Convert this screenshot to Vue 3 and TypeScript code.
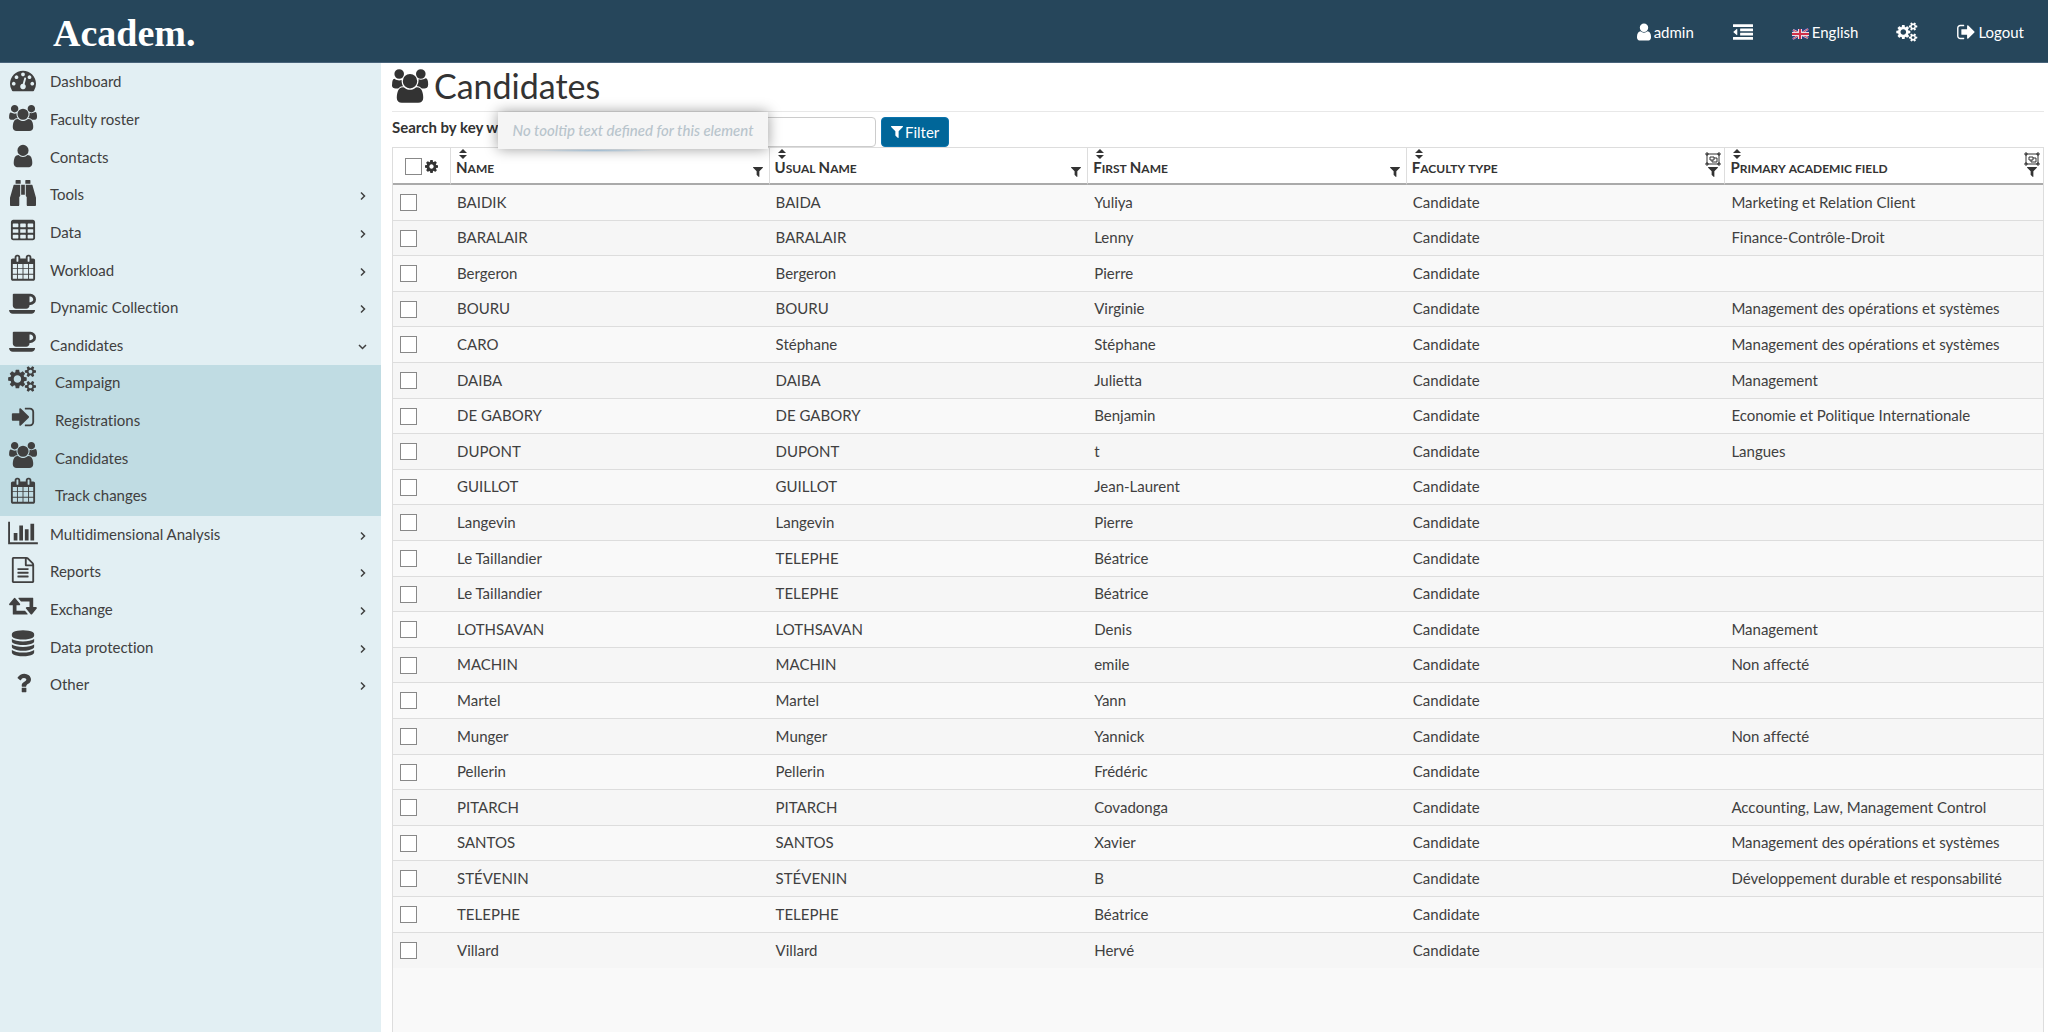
<script setup lang="ts">
import { ref } from 'vue'

interface Icon {
  box: string
  d: string
}

interface MenuItem {
  label: string
  icon: string
  arrow?: boolean
  children?: MenuItem[]
}

interface Candidate {
  name: string
  usual: string
  first: string
  field: string
}

const icons: Record<string, Icon> = {
  dashboard: {
    box: '0 0 1792 1792',
    d: 'M384 1152q0-53-37.5-90.5t-90.5-37.5-90.5 37.5-37.5 90.5 37.5 90.5 90.5 37.5 90.5-37.5 37.5-90.5zm192-448q0-53-37.5-90.5t-90.5-37.5-90.5 37.5-37.5 90.5 37.5 90.5 90.5 37.5 90.5-37.5 37.5-90.5zm428 481l101-382q6-26-7.5-48.5t-38.5-29.5-48 6.5-30 39.5l-101 382q-60 5-107 43.5t-63 98.5q-20 77 20 146t117 89 146-20 89-117q16-60-6-117t-72-91zm660-33q0-53-37.5-90.5t-90.5-37.5-90.5 37.5-37.5 90.5 37.5 90.5 90.5 37.5 90.5-37.5 37.5-90.5zm-640-640q0-53-37.5-90.5t-90.5-37.5-90.5 37.5-37.5 90.5 37.5 90.5 90.5 37.5 90.5-37.5 37.5-90.5zm448 192q0-53-37.5-90.5t-90.5-37.5-90.5 37.5-37.5 90.5 37.5 90.5 90.5 37.5 90.5-37.5 37.5-90.5zm320 448q0 261-141 483-19 29-54 29h-1402q-35 0-54-29-141-221-141-483 0-182 71-348t191-286 286-191 348-71 348 71 286 191 191 286 71 348z',
  },
  users: {
    box: '64 0 1920 1792',
    d: 'M657 896q-162 5-265 128h-134q-82 0-138-40.5t-56-118.5q0-353 124-353 6 0 43.5 21t97.5 42.5 119 21.5q67 0 133-23-5 37-5 66 0 159 90 290zm1071 637q0 120-73 189.5t-194 69.5h-874q-121 0-194-69.5t-73-189.5q0-53 3.5-103.5t14-109 26.5-108.5 43-97.5 62-81 85.5-53.5 111.5-20q10 0 43 21.5t73 48 107 48 135 21.5 135-21.5 107-48 73-48 43-21.5q61 0 111.5 20t85.5 53.5 62 81 43 97.5 26.5 108.5 14 109 3.5 103.5zm-1024-1277q0 106-75 181t-181 75-181-75-75-181 75-181 181-75 181 75 75 181zm704 384q0 159-112.5 271.5t-271.5 112.5-271.5-112.5-112.5-271.5 112.5-271.5 271.5-112.5 271.5 112.5 112.5 271.5zm576 225q0 78-56 118.5t-138 40.5h-134q-103-123-265-128 90-131 90-290 0-29-5-66 66 23 133 23 59 0 119-21.5t97.5-42.5 43.5-21q124 0 124 353zm-128-609q0 106-75 181t-181 75-181-75-75-181 75-181 181-75 181 75 75 181z',
  },
  user: {
    box: '256 0 1280 1792',
    d: 'M1536 1399q0 109-62.5 187t-150.5 78h-854q-88 0-150.5-78t-62.5-187q0-85 8.5-160.5t31.5-152 58.5-131 94-89 134.5-34.5q131 128 313 128t313-128q76 0 134.5 34.5t94 89 58.5 131 31.5 152 8.5 160.5zm-256-887q0 159-112.5 271.5t-271.5 112.5-271.5-112.5-112.5-271.5 112.5-271.5 271.5-112.5 271.5 112.5 112.5 271.5z',
  },
  binoculars: {
    box: '0 0 1792 1792',
    d: 'M704 320v768q0 26-19 45t-45 19v576q0 26-19 45t-45 19h-512q-26 0-45-19t-19-45v-512l249-873q7-23 31-23h424zm320 0v704h-256v-704h256zm768 896v512q0 26-19 45t-45 19h-512q-26 0-45-19t-19-45v-576q-26 0-45-19t-19-45v-768h424q24 0 31 23zm-1056-1184v224h-352v-224q0-14 9-23t23-9h288q14 0 23 9t9 23zm672 0v224h-352v-224q0-14 9-23t23-9h288q14 0 23 9t9 23z',
  },
  table: {
    box: '0 0 1792 1792',
    d: 'M224 128h1344q66 0 113 47t47 113v1088q0 66-47 113t-113 47h-1344q-66 0-113-47t-47-113v-1088q0-66 47-113t113-47zM192 416v192q0 32 32 32h320q32 0 32-32v-192q0-32-32-32h-320q-32 0-32 32zM704 416v192q0 32 32 32h320q32 0 32-32v-192q0-32-32-32h-320q-32 0-32 32zM1216 416v192q0 32 32 32h320q32 0 32-32v-192q0-32-32-32h-320q-32 0-32 32zM192 800v192q0 32 32 32h320q32 0 32-32v-192q0-32-32-32h-320q-32 0-32 32zM704 800v192q0 32 32 32h320q32 0 32-32v-192q0-32-32-32h-320q-32 0-32 32zM1216 800v192q0 32 32 32h320q32 0 32-32v-192q0-32-32-32h-320q-32 0-32 32zM192 1184v192q0 32 32 32h320q32 0 32-32v-192q0-32-32-32h-320q-32 0-32 32zM704 1184v192q0 32 32 32h320q32 0 32-32v-192q0-32-32-32h-320q-32 0-32 32zM1216 1184v192q0 32 32 32h320q32 0 32-32v-192q0-32-32-32h-320q-32 0-32 32z',
  },
  calendar: {
    box: '0 90 1792 1792',
    d: 'M192 1664h288v-288h-288v288zm352 0h320v-288h-320v288zm-352-352h288v-320h-288v320zm352 0h320v-320h-320v320zm-352-384h288v-288h-288v288zm736 736h320v-288h-320v288zm-384-736h320v-288h-320v288zm768 736h288v-288h-288v288zm-384-352h320v-320h-320v320zm-352-864v-288q0-13-9.5-22.5t-22.5-9.5h-64q-13 0-22.5 9.5t-9.5 22.5v288q0 13 9.5 22.5t22.5 9.5h64q13 0 22.5-9.5t9.5-22.5zm736 864h288v-320h-288v320zm-384-384h320v-288h-320v288zm384 0h288v-288h-288v288zm32-480v-288q0-13-9.5-22.5t-22.5-9.5h-64q-13 0-22.5 9.5t-9.5 22.5v288q0 13 9.5 22.5t22.5 9.5h64q13 0 22.5-9.5t9.5-22.5zm384-64v1280q0 52-38 90t-90 38h-1408q-52 0-90-38t-38-90v-1280q0-52 38-90t90-38h128v-96q0-66 47-113t113-47h64q66 0 113 47t47 113v96h384v-96q0-66 47-113t113-47h64q66 0 113 47t47 113v96h128q52 0 90 38t38 90z',
  },
  coffee: {
    box: '0 360 1920 1792',
    d: 'M1664 800q0-80-56-136t-136-56h-64v384h64q80 0 136-56t56-136zm-1664 736h1792q0 106-75 181t-181 75h-1280q-106 0-181-75t-75-181zm1856-736q0 159-112.5 271.5t-271.5 112.5h-64v32q0 92-66 158t-158 66h-704q-92 0-158-66t-66-158v-736q0-26 19-45t45-19h1152q159 0 271.5 112.5t112.5 271.5z',
  },
  cogs: {
    box: '0 0 1920 1792',
    d: 'M832 896q0-106-75-181t-181-75-181 75-75 181 75 181 181 75 181-75 75-181zm768 512q0-52-38-90t-90-38-90 38-38 90q0 53 37.5 90.5t90.5 37.5 90.5-37.5 37.5-90.5zm0-1024q0-52-38-90t-90-38-90 38-38 90q0 53 37.5 90.5t90.5 37.5 90.5-37.5 37.5-90.5zm-384 421v185q0 10-7 19.5t-16 10.5l-155 24q-11 35-32 76 34 48 90 115 7 11 7 20 0 12-7 19-23 30-82.5 89.5t-78.5 59.5q-11 0-21-7l-115-90q-37 19-77 31-11 108-23 155-7 24-30 24h-186q-11 0-20-7.5t-10-17.5l-23-153q-34-10-75-31l-118 89q-7 7-20 7-11 0-21-8-144-133-144-160 0-9 7-19 10-14 41-53t47-61q-23-44-35-82l-152-24q-10-1-17-9.5t-7-19.5v-185q0-10 7-19.5t16-10.5l155-24q11-35 32-76-34-48-90-115-7-11-7-20 0-12 7-20 22-30 82-89t79-59q11 0 21 7l115 90q34-18 77-32 11-108 23-154 7-24 30-24h186q11 0 20 7.5t10 17.5l23 153q34 10 75 31l118-89q8-7 20-7 11 0 21 8 144 133 144 160 0 8-7 19-12 16-42 54t-45 60q23 48 34 82l152 23q10 2 17 10.5t7 19.5zm640 533v140q0 16-149 31-12 27-30 52 51 113 51 138 0 4-4 7-122 71-124 71-8 0-46-47t-52-68q-20 2-30 2t-30-2q-14 21-52 68t-46 47q-2 0-124-71-4-3-4-7 0-25 51-138-18-25-30-52-149-15-149-31v-140q0-16 149-31 13-29 30-52-51-113-51-138 0-4 4-7 4-2 35-20t59-34 30-16q8 0 46 46.5t52 67.5q20-2 30-2t30 2q51-71 92-112l6-2q4 0 124 70 4 3 4 7 0 25-51 138 17 23 30 52 149 15 149 31zm0-1024v140q0 16-149 31-12 27-30 52 51 113 51 138 0 4-4 7-122 71-124 71-8 0-46-47t-52-68q-20 2-30 2t-30-2q-14 21-52 68t-46 47q-2 0-124-71-4-3-4-7 0-25 51-138-18-25-30-52-149-15-149-31v-140q0-16 149-31 13-29 30-52-51-113-51-138 0-4 4-7 4-2 35-20t59-34 30-16q8 0 46 46.5t52 67.5q20-2 30-2t30 2q51-71 92-112l6-2q4 0 124 70 4 3 4 7 0 25-51 138 17 23 30 52 149 15 149 31z',
  },
  cog: {
    box: '128 128 1536 1536',
    d: 'M1152 896q0-106-75-181t-181-75-181 75-75 181 75 181 181 75 181-75 75-181zm512-109v222q0 12-8 23t-20 13l-185 28q-19 54-39 91 35 50 107 138 10 12 10 25t-9 23q-27 37-99 108t-94 71q-12 0-26-9l-138-108q-44 23-91 38-16 136-29 186-7 28-36 28h-222q-14 0-24.5-8.5t-11.5-21.5l-28-184q-49-16-90-37l-141 107q-10 9-25 9-14 0-25-11-126-114-165-168-7-10-7-23 0-12 8-23 15-21 51-66.5t54-70.5q-27-50-41-99l-183-27q-13-2-21-12.5t-8-23.5v-222q0-12 8-23t19-13l186-28q14-46 39-92-40-57-107-138-10-12-10-24 0-10 9-23 26-36 98.5-107.5t94.5-71.5q13 0 26 10l138 107q44-23 91-38 16-136 29-186 7-28 36-28h222q14 0 24.5 8.5t11.5 21.5l28 184q49 16 90 37l142-107q9-9 24-9 13 0 25 10 129 119 165 170 7 8 7 22 0 12-8 23-15 21-51 66.5t-54 70.5q26 50 41 98l183 28q13 2 21 12.5t8 23.5z',
  },
  signIn: {
    box: '0 0 1792 1792',
    d: 'M1312 896q0 26-19 45l-544 544q-19 19-45 19t-45-19-19-45v-288h-448q-26 0-45-19t-19-45v-384q0-26 19-45t45-19h448v-288q0-26 19-45t45-19 45 19l544 544q19 19 19 45zm352-352v704q0 119-84.500 203.500t-203.500 84.500h-320q-13 0-22.500-9.500t-9.500-22.500q0-4-1-20t-.5-26.500 3-23.500 10-19.500 20.500-6.500h320q66 0 113-47t47-113v-704q0-66-47-113t-113-47h-312l-11.500-1-11.500-3-8-5.500-7-9-2-13.500q0-4-1-20t-.5-26.500 3-23.500 10-19.500 20.500-6.500h320q119 0 203.500 84.500t84.500 203.500z',
  },
  signOut: {
    box: '64 0 1600 1792',
    d: 'M704 1440q0 4 1 20t.5 26.500-3 23.500-10 19.500-20.500 6.500h-320q-119 0-203.500-84.500t-84.500-203.500v-704q0-119 84.500-203.500t203.500-84.500h320q13 0 22.500 9.500t9.500 22.500q0 4 1 20t.5 26.500-3 23.500-10 19.500-20.500 6.500h-320q-66 0-113 47t-47 113v704q0 66 47 113t113 47h312l11.500 1 11.500 3 8 5.500 7 9 2 13.500zm928-544q0 26-19 45l-544 544q-19 19-45 19t-45-19-19-45v-288h-448q-26 0-45-19t-19-45v-384q0-26 19-45t45-19h448v-288q0-26 19-45t45-19 45 19l544 544q19 19 19 45z',
  },
  chart: {
    box: '0 0 2048 1792',
    d: 'M640 896v512h-256v-512h256zm384-512v1024h-256v-1024h256zm1024 1152v128h-2048v-1536h128v1408h1920zm-640-896v768h-256v-768h256zm384-384v1152h-256v-1152h256z',
  },
  file: {
    box: '0 0 1792 1792',
    d: 'M1596 380q28 28 48 76t20 88v1152q0 40-28 68t-68 28h-1344q-40 0-68-28t-28-68v-1600q0-40 28-68t68-28h896q40 0 88 20t76 48zm-444-244v376h376q-10-29-22-41l-313-313q-12-12-41-22zm384 1528v-1024h-416q-40 0-68-28t-28-68v-416h-768v1536h1280zm-1024-864q0-14 9-23t23-9h704q14 0 23 9t9 23v64q0 14-9 23t-23 9h-704q-14 0-23-9t-9-23v-64zm736 224q14 0 23 9t9 23v64q0 14-9 23t-23 9h-704q-14 0-23-9t-9-23v-64q0-14 9-23t23-9h704zm0 256q14 0 23 9t9 23v64q0 14-9 23t-23 9h-704q-14 0-23-9t-9-23v-64q0-14 9-23t23-9h704z',
  },
  exchange: {
    box: '0 190 1920 1792',
    d: 'M1280 1504q0 13-9.500 22.500t-22.500 9.500h-960q-8 0-13.500-2t-9-7-5.500-8-3-11.500-1-11.500v-600h-192q-26 0-45-19t-19-45q0-24 15-41l320-384q19-22 49-22t49 22l320 384q15 17 15 41 0 26-19 45t-45 19h-192v384h576q16 0 25 11l160 192q7 10 7 21zm640-416q0 24-15 41l-320 384q-20 23-49 23t-49-23l-320-384q-15-17-15-41 0-26 19-45t45-19h192v-384h-576q-16 0-25-12l-160-192q-7-9-7-20 0-13 9.500-22.500t22.500-9.500h960q8 0 13.500 2t9 7 5.500 8 3 11.500 1 11.500v600h192q26 0 45 19t19 45z',
  },
  database: {
    box: '0 190 1792 1792',
    d: 'M896 768q237 0 443-43t325-127v170q0 69-103 128t-280 93.500-385 34.500-385-34.500-280-93.500-103-128v-170q119 84 325 127t443 43zm0 768q237 0 443-43t325-127v170q0 69-103 128t-280 93.500-385 34.500-385-34.500-280-93.500-103-128v-170q119 84 325 127t443 43zm0-384q237 0 443-43t325-127v170q0 69-103 128t-280 93.500-385 34.500-385-34.500-280-93.500-103-128v-170q119 84 325 127t443 43zm0-1152q208 0 385 34.500t280 93.500 103 128v128q0 69-103 128t-280 93.500-385 34.500-385-34.500-280-93.500-103-128v-128q0-69 103-128t280-93.500 385-34.500z',
  },
  question: {
    box: '-40 0 1792 1792',
    d: 'M1088 1256v240q0 16-12 28t-28 12h-240q-16 0-28-12t-12-28v-240q0-16 12-28t28-12h240q16 0 28 12t12 28zm316-600q0 54-15.500 101t-35 76.500-55 59.500-57.500 43.500-61 35.500q-41 23-68.500 65t-27.500 67q0 17-12 32.500t-28 15.500h-240q-15 0-25.500-18.500t-10.500-37.500v-45q0-83 65-156.500t143-108.500q59-27 84-56t25-76q0-42-46.500-74t-107.500-32q-65 0-108 29-35 25-107 115-13 16-31 16-12 0-25-8l-164-125q-13-10-15.500-25t5.500-28q160-266 464-266 80 0 161 31t146 83 106 127.500 41 158.500z',
  },
  filter: {
    box: '192 256 1408 1408',
    d: 'M1595 295q17 41-14 70l-493 493v742q0 42-39 59-13 5-25 5-27 0-45-19l-256-256q-19-19-19-45v-486l-493-493q-31-29-14-70 17-39 59-39h1280q42 0 59 39z',
  },
  outdent: {
    box: '0 128 1792 1408',
    d: 'M352 544q32 0 32 32v512q0 32-32 32-14 0-23-9l-288-256q-18-23 0-46l288-256q9-9 23-9zM32 128h1728q32 0 32 32v192q0 32-32 32h-1728q-32 0-32-32v-192q0-32 32-32zM672 512h1088q32 0 32 32v192q0 32-32 32h-1088q-32 0-32-32v-192q0-32 32-32zM672 896h1088q32 0 32 32v192q0 32-32 32h-1088q-32 0-32-32v-192q0-32 32-32zM32 1280h1728q32 0 32 32v192q0 32-32 32h-1728q-32 0-32-32v-192q0-32 32-32z',
  },
  sort: { box: '0 0 8 10', d: 'M4 0l4 4h-8zM0 6h8l-4 4z' },
}

const menu: MenuItem[] = [
  { label: 'Dashboard', icon: 'dashboard' },
  { label: 'Faculty roster', icon: 'users' },
  { label: 'Contacts', icon: 'user' },
  { label: 'Tools', icon: 'binoculars', arrow: true },
  { label: 'Data', icon: 'table', arrow: true },
  { label: 'Workload', icon: 'calendar', arrow: true },
  { label: 'Dynamic Collection', icon: 'coffee', arrow: true },
  {
    label: 'Candidates',
    icon: 'coffee',
    children: [
      { label: 'Campaign', icon: 'cogs' },
      { label: 'Registrations', icon: 'signIn' },
      { label: 'Candidates', icon: 'users' },
      { label: 'Track changes', icon: 'calendar' },
    ],
  },
  { label: 'Multidimensional Analysis', icon: 'chart', arrow: true },
  { label: 'Reports', icon: 'file', arrow: true },
  { label: 'Exchange', icon: 'exchange', arrow: true },
  { label: 'Data protection', icon: 'database', arrow: true },
  { label: 'Other', icon: 'question', arrow: true },
]

const columns = [
  { label: 'Name', grouped: false },
  { label: 'Usual Name', grouped: false },
  { label: 'First Name', grouped: false },
  { label: 'Faculty type', grouped: true },
  { label: 'Primary academic field', grouped: true },
]

// Headings are set in capitals, with a taller first letter on capitalised words.
const isCapitalised = (word: string): boolean => /^[A-Z]/.test(word)

const person = (name: string, usual: string, first: string, field = ''): Candidate => ({ name, usual, first, field })

const candidates: Candidate[] = [
  person('BAIDIK', 'BAIDA', 'Yuliya', 'Marketing et Relation Client'),
  person('BARALAIR', 'BARALAIR', 'Lenny', 'Finance-Contrôle-Droit'),
  person('Bergeron', 'Bergeron', 'Pierre'),
  person('BOURU', 'BOURU', 'Virginie', 'Management des opérations et systèmes'),
  person('CARO', 'Stéphane', 'Stéphane', 'Management des opérations et systèmes'),
  person('DAIBA', 'DAIBA', 'Julietta', 'Management'),
  person('DE GABORY', 'DE GABORY', 'Benjamin', 'Economie et Politique Internationale'),
  person('DUPONT', 'DUPONT', 't', 'Langues'),
  person('GUILLOT', 'GUILLOT', 'Jean-Laurent'),
  person('Langevin', 'Langevin', 'Pierre'),
  person('Le Taillandier', 'TELEPHE', 'Béatrice'),
  person('Le Taillandier', 'TELEPHE', 'Béatrice'),
  person('LOTHSAVAN', 'LOTHSAVAN', 'Denis', 'Management'),
  person('MACHIN', 'MACHIN', 'emile', 'Non affecté'),
  person('Martel', 'Martel', 'Yann'),
  person('Munger', 'Munger', 'Yannick', 'Non affecté'),
  person('Pellerin', 'Pellerin', 'Frédéric'),
  person('PITARCH', 'PITARCH', 'Covadonga', 'Accounting, Law, Management Control'),
  person('SANTOS', 'SANTOS', 'Xavier', 'Management des opérations et systèmes'),
  person('STÉVENIN', 'STÉVENIN', 'B', 'Développement durable et responsabilité'),
  person('TELEPHE', 'TELEPHE', 'Béatrice'),
  person('Villard', 'Villard', 'Hervé'),
]

const keyword = ref('')
const selected = ref<number[]>([])
</script>

<template>
  <div class="app">
    <header class="topbar">
      <a class="logo" href="#">Academ.</a>
      <nav class="tools" aria-label="Account">
        <a href="#" class="tool">
          <svg class="i-user" :viewBox="icons.user.box"><path :d="icons.user.d" /></svg>
          <span>admin</span>
        </a>
        <button type="button" class="tool" aria-label="Toggle menu">
          <svg class="i-outdent" :viewBox="icons.outdent.box"><path :d="icons.outdent.d" /></svg>
        </button>
        <button type="button" class="tool">
          <svg class="i-flag" viewBox="0 0 17 12">
            <path fill="#2f3f86" d="M0 2q4-1 8-1t9-1v10q-5 1-9 1t-8 1z" />
            <path stroke="#d9cfdc" stroke-width="2" d="M1 2l15 8M16 1L1 11" />
            <path stroke="#c8465a" stroke-width="1" d="M1 2l15 8M16 1L1 11" />
            <path stroke="#e8dfe6" stroke-width="4" d="M8 1v10M0 6h17" />
            <path stroke="#d0304a" stroke-width="2" d="M8 1v10M0 6h17" />
          </svg>
          <span>English</span>
        </button>
        <button type="button" class="tool" aria-label="Settings">
          <svg class="i-cogs" :viewBox="icons.cogs.box"><path :d="icons.cogs.d" /></svg>
        </button>
        <a href="#" class="tool">
          <svg class="i-out" :viewBox="icons.signOut.box"><path :d="icons.signOut.d" /></svg>
          <span>Logout</span>
        </a>
      </nav>
    </header>

    <div class="body">
      <nav class="sidebar" aria-label="Main">
        <ul class="menu">
          <li v-for="item in menu" :key="item.label">
            <a href="#" class="entry">
              <svg class="glyph" :viewBox="icons[item.icon].box"><path fill-rule="evenodd" :d="icons[item.icon].d" /></svg>
              <span class="entry-label">{{ item.label }}</span>
              <svg v-if="item.arrow" class="angle" viewBox="0 0 20 20"><path d="M6 3l7 7-7 7" /></svg>
              <svg v-if="item.children" class="angle" viewBox="0 0 20 20"><path d="M2 6l7 7 7-7" /></svg>
            </a>
            <ul v-if="item.children" class="menu submenu">
              <li v-for="child in item.children" :key="child.label">
                <a href="#" class="entry">
                  <svg class="glyph" :viewBox="icons[child.icon].box"><path :d="icons[child.icon].d" /></svg>
                  <span class="entry-label">{{ child.label }}</span>
                </a>
              </li>
            </ul>
          </li>
        </ul>
      </nav>

      <main class="main">
        <h1 class="title">
          <svg class="title-icon" :viewBox="icons.users.box"><path :d="icons.users.d" /></svg>
          <span>Candidates</span>
        </h1>

        <form class="search" @submit.prevent>
          <label class="search-label" for="keyword">Search by key word</label>
          <input id="keyword" v-model="keyword" class="search-input" type="text" />
          <button type="submit" class="filter-btn">
            <svg class="i-filter-btn" :viewBox="icons.filter.box"><path :d="icons.filter.d" /></svg>
            <span>Filter</span>
          </button>
          <div class="tooltip" role="tooltip">No tooltip text defined for this element</div>
        </form>

        <div class="grid">
          <table>
            <thead>
              <tr>
                <th class="pick">
                  <div class="pick-head">
                    <input type="checkbox" class="tick" aria-label="Select all" />
                    <button type="button" class="plain" aria-label="Column settings">
                      <svg class="i-cog" :viewBox="icons.cog.box"><path :d="icons.cog.d" /></svg>
                    </button>
                  </div>
                </th>
                <th v-for="col in columns" :key="col.label" scope="col">
                  <div class="col-head">
                    <div class="col-name">
                      <svg class="i-sort" :viewBox="icons.sort.box"><path :d="icons.sort.d" /></svg>
                      <div class="words">
                        <span
                          v-for="word in col.label.split(' ')"
                          :key="word"
                          class="word"
                          :class="{ capital: isCapitalised(word) }"
                        >{{ word }}</span>
                      </div>
                    </div>
                    <div class="col-tools">
                      <svg v-if="col.grouped" class="i-group" viewBox="0 0 16 14">
                        <path d="M2 2h12v10h-12zM5 5h4v3h-4zM9 6h3v4h-5v-2" />
                        <path d="M1 1h2v2h-2zM13 1h2v2h-2zM1 11h2v2h-2zM13 11h2v2h-2z" />
                      </svg>
                      <button type="button" class="plain" :aria-label="'Filter ' + col.label">
                        <svg class="i-filter" :viewBox="icons.filter.box"><path :d="icons.filter.d" /></svg>
                      </button>
                    </div>
                  </div>
                </th>
              </tr>
            </thead>
            <tbody>
              <tr v-for="(row, index) in candidates" :key="index">
                <td class="pick">
                  <input v-model="selected" type="checkbox" class="tick" :value="index" :aria-label="'Select ' + row.name" />
                </td>
                <td>{{ row.name }}</td>
                <td>{{ row.usual }}</td>
                <td>{{ row.first }}</td>
                <td>Candidate</td>
                <td>{{ row.field }}</td>
              </tr>
            </tbody>
          </table>
        </div>
      </main>
    </div>
  </div>
</template>

<style>
body {
  margin: 0;
  background: #fff;
}
</style>

<style scoped>
* {
  box-sizing: border-box;
}

.app {
  display: flex;
  flex-direction: column;
  min-height: 100vh;
  font-family: Lato, 'Liberation Sans', sans-serif;
  font-size: 15px;
  font-variant-ligatures: none;
  line-height: 20px;
  color: #404040;
}

svg {
  display: block;
  flex: none;
  fill: currentColor;
  overflow: visible;
}

a {
  color: inherit;
  text-decoration: none;
}

button {
  font: inherit;
  color: inherit;
  cursor: pointer;
}

.topbar {
  display: flex;
  align-items: center;
  justify-content: space-between;
  height: 63px;
  padding: 0 24px 0 53px;
  border-bottom: 1px solid #48637a;
  background: #26465b;
  color: #fff;
}

.logo {
  font-family: 'Liberation Serif', serif;
  font-size: 38px;
  font-weight: 700;
  line-height: 48px;
  padding-top: 4px;
}

.tools {
  display: flex;
  align-items: center;
  gap: 39px;
  padding-top: 2px;
}

.tool {
  display: flex;
  align-items: center;
  gap: 3px;
  padding: 0;
  border: 0;
  background: none;
}

.i-user {
  width: 14px;
  height: 20px;
}

.i-outdent {
  width: 20px;
  height: 16px;
}

.i-flag {
  width: 17px;
  height: 12px;
  margin-top: 3px;
}

.i-cogs {
  width: 21px;
  height: 20px;
}

.i-out {
  width: 18px;
  height: 20px;
}

.body {
  display: flex;
  flex: 1;
}

.sidebar {
  flex: none;
  width: 381px;
  background: #e2eff3;
}

.menu {
  margin: 0;
  padding: 0;
  list-style: none;
}

.entry {
  display: flex;
  align-items: flex-start;
  height: 38px;
  padding: 4px 13px 0 8px;
}

.menu > li:nth-child(3n) > .entry {
  height: 37px;
}

.glyph {
  width: 30px;
  height: 26px;
}

.entry-label {
  flex: 1;
  padding: 4px 0 0 12px;
}

.angle {
  width: 10px;
  height: 10px;
  margin-top: 11px;
  fill: none;
  stroke: currentColor;
  stroke-width: 3;
}

.submenu {
  background: #c0dce3;
}

.submenu .entry {
  padding-top: 1px;
}

.submenu .entry-label {
  padding: 6px 0 0 17px;
}

.main {
  display: flex;
  flex: 1;
  flex-direction: column;
  min-width: 0;
  padding: 0 4px 0 11px;
}

.title {
  display: flex;
  align-items: center;
  gap: 6px;
  height: 49px;
  margin: 0;
  padding-bottom: 2px;
  border-bottom: 1px solid #e8e8e8;
  font-size: 34px;
  font-weight: 400;
  line-height: 46px;
  color: #333;
}

.title-icon {
  width: 36px;
  height: 34px;
}

.search {
  position: relative;
  display: flex;
  align-items: flex-start;
  height: 35px;
  padding-top: 5px;
}

.search-label {
  width: 140px;
  font-weight: 700;
  white-space: nowrap;
  color: #333;
}

.search-input {
  width: 344px;
  height: 30px;
  padding: 0 8px;
  border: 1px solid #ccc;
  border-radius: 4px;
  font: inherit;
}

.filter-btn {
  display: flex;
  align-items: center;
  gap: 2px;
  height: 30px;
  margin-left: 5px;
  padding: 0 9px;
  border: 1px solid #0a73ad;
  border-radius: 4px;
  background: #006699;
  color: #fff;
}

.i-filter-btn {
  width: 12px;
  height: 12px;
}

.tooltip {
  position: absolute;
  top: 0;
  left: 106px;
  min-width: 270px;
  height: 37px;
  padding-top: 8px;
  background: #f5f5f5;
  box-shadow: 0 0 14px rgba(0, 0, 0, 0.4);
  font-style: italic;
  font-weight: 500;
  font-variant-ligatures: normal;
  text-align: center;
  white-space: nowrap;
  color: #b8c4cc;
}

.tooltip::after {
  content: '';
  position: absolute;
  top: 100%;
  left: 32px;
  width: 132px;
  height: 3px;
  background: radial-gradient(closest-side, rgba(130, 175, 210, 0.6), rgba(130, 175, 210, 0));
}

.grid {
  flex: 1;
  border: 1px solid #ddd;
  border-bottom: 0;
  background: #f9f9f9;
}

table {
  width: 100%;
  table-layout: fixed;
  border-collapse: separate;
  border-spacing: 0;
}

th {
  height: 37px;
  padding: 0;
  border-bottom: 2px solid #aaa;
  border-left: 1px solid #ddd;
  background: #fff;
  text-align: left;
  vertical-align: top;
  color: #333;
}

th.pick {
  width: 57px;
  border-left: 0;
}

.pick-head {
  display: flex;
  align-items: center;
  gap: 3px;
  padding: 10px 0 0 12px;
}

.plain {
  padding: 0;
  border: 0;
  background: none;
}

.i-cog {
  width: 13px;
  height: 13px;
}

.col-head {
  display: flex;
  justify-content: space-between;
  padding: 1px 3px 0 5px;
}

.words {
  display: flex;
  align-items: baseline;
  gap: 3px;
  font-size: 12px;
  line-height: 16px;
  text-transform: uppercase;
}

.word {
  display: block;
}

.capital::first-letter {
  font-size: 15px;
}

.i-sort {
  width: 8px;
  height: 10px;
  margin-left: 3px;
}

.col-tools {
  display: flex;
  flex-direction: column;
  align-items: center;
  justify-content: flex-end;
  gap: 1px;
  width: 16px;
}

.i-group {
  width: 16px;
  height: 14px;
  fill: none;
  stroke: currentColor;
}

.i-filter {
  width: 10px;
  height: 10px;
}

.tick {
  display: block;
  width: 17px;
  height: 17px;
  margin: 0;
  appearance: none;
  border: 1px solid #888;
  background: #fff;
}

td {
  height: 36px;
  padding: 0 7px 2px;
  border-bottom: 1px solid #ddd;
  background: #f9f9f9;
}

td.pick {
  padding-bottom: 0;
}

tr:nth-child(5n + 2) td,
tr:nth-child(5n + 4) td {
  height: 35px;
}

tbody tr:nth-child(even) td {
  background: #f6f6f6;
}

tbody tr:last-child td {
  border-bottom: 0;
}
</style>
